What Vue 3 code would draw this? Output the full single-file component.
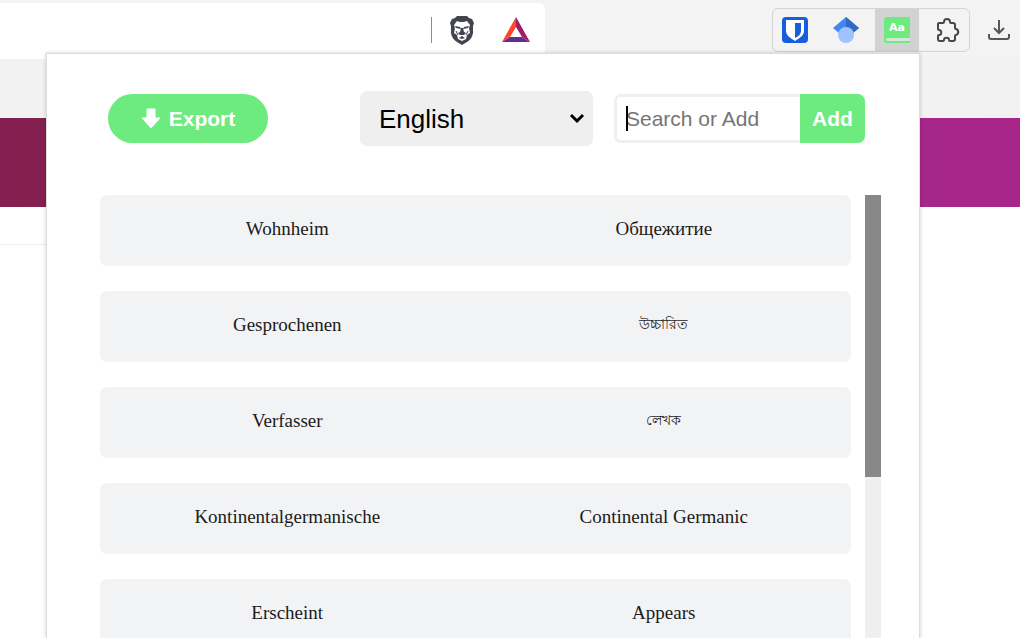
<template>
  <div class="browser">
    <header class="toolbar">
      <div class="address-bar">
        <span class="divider"></span>
        <button class="icon-btn" aria-label="Shields">
          <svg width="26" height="30" viewBox="0 0 26 30">
            <path
              d="M8 1h10l2 2 3 1 2 4-1 3v7c-1 5-3 7-6 9l-5 3-5-3c-3-2-5-4-6-9v-7L1 8l2-4 3-1z"
              fill="#42444f"
            />
            <path
              d="M8 6l3 1h4l3-1 3 4-1 3 1 5-3 2-1 4-4 2-4-2-1-4-3-2 1-5-1-3z"
              fill="#fff"
            />
            <path
              d="M6 11l5 1 1 2-5-1zM20 11l-5 1-1 2 5-1zM12 13h2l1 4 2 1-2 2h-4l-2-2 2-1zM10 23l3-2 3 2-3 1z"
              fill="#42444f"
            />
            <path d="M7 16l2 4M19 16l-2 4" fill="none" stroke="#42444f" />
          </svg>
        </button>
        <button class="icon-btn" aria-label="Rewards">
          <svg width="30" height="28" viewBox="0 0 30 28">
            <path d="M15 1L1 26l8-5 6-10z" fill="#ff4724" />
            <path d="M15 1l14 25-8-5-6-10z" fill="#9e1f63" />
            <path d="M1 26h28l-8-5H9z" fill="#662d91" />
          </svg>
        </button>
      </div>

      <div class="extensions">
        <button class="icon-btn ext" aria-label="Bitwarden">
          <svg width="26" height="26" viewBox="0 0 26 26">
            <rect width="26" height="26" rx="4" fill="#175ddc" />
            <path d="M4 3h18v11c0 4-4 7-9 10-5-3-9-6-9-10z" fill="#fff" />
            <path d="M13 6h6v8c0 3-2 5-6 7z" fill="#175ddc" />
          </svg>
        </button>
        <button class="icon-btn ext" aria-label="Google Scholar">
          <svg width="26" height="26" viewBox="0 0 26 26">
            <path d="M13 0L0 11l6 5h14l6-5z" fill="#4285f4" />
            <path d="M13 0l13 11-6 5-7-5z" fill="#356ac3" />
            <circle cx="13" cy="18" r="8" fill="#a0c3ff" />
            <path d="M6 15a8 8 0 0 1 14 0 8 8 0 0 0-14 0z" fill="#76a7fa" />
          </svg>
        </button>
        <button class="icon-btn ext active" aria-label="Dictionary">
          <svg width="26" height="26" viewBox="0 0 26 26">
            <path d="M3 0h23v26H3a3 3 0 0 1-3-3V3a3 3 0 0 1 3-3z" fill="#6eeb7f" />
            <path d="M3 21h23v3H3q-2-1.500 0-3z" fill="#d8e6d9" />
            <text x="13" y="14" text-anchor="middle" class="book-text">Aa</text>
          </svg>
        </button>
        <button class="icon-btn ext" aria-label="Extensions">
          <svg width="26" height="26" viewBox="0 0 26 26">
            <path
              d="M5 6h4q1 0 1-1c0-4 6-4 6 0q0 1 1 1h2q2 0 2 2v3q0 1 1 1c3 1 3 5 0 6q-1 0-1 1v3q0 2-2 2h-3q-1 0-1-1c0-3-5-3-5 0q0 1-1 1H6q-2 0-2-2v-3q0-1 1-1c3 0 3-5 0-5q-1 0-1-1V7q0-1 1-1z"
              fill="none"
              stroke="#45474b"
              stroke-width="2"
              stroke-linejoin="round"
            />
          </svg>
        </button>
      </div>

      <button class="icon-btn download" aria-label="Downloads">
        <svg width="22" height="22" viewBox="0 0 22 22" fill="none" stroke="#55575b" stroke-width="2">
          <path d="M11 1v13M6 9l5 5 5-5M1 15v3q0 2 2 2h16q2 0 2-2v-3" />
        </svg>
      </button>
    </header>

    <div class="page-top"></div>
    <div class="banner"></div>
    <div class="page-line"></div>

    <main class="popup">
      <div class="controls">
        <button class="export-btn">
          <svg width="20" height="22" viewBox="0 0 20 22">
            <path
              d="M6 1h8v9h5L10 20 1 10h5z"
              fill="#fff"
              stroke="#fff"
              stroke-linejoin="round"
            />
          </svg>
          Export
        </button>

        <div class="language">
          <select v-model="language" aria-label="Language">
            <option v-for="lang in languages" :key="lang">{{ lang }}</option>
          </select>
          <svg class="chevron" width="16" height="12" viewBox="0 0 16 12">
            <path d="M2 2l6 6 6-6" fill="none" stroke="#000" stroke-width="3" />
          </svg>
        </div>

        <form class="search" @submit.prevent="addWord">
          <div class="field">
            <input v-model="query" type="text" placeholder="Search or Add" aria-label="Search or Add" />
            <span class="caret"></span>
          </div>
          <button class="add-btn">Add</button>
        </form>
      </div>

      <div class="word-area">
        <ul class="words">
          <li v-for="word in words" :key="word.source" class="word">
            <span>{{ word.source }}</span>
            <span :lang="word.lang">{{ word.target }}</span>
          </li>
        </ul>
        <div class="track">
          <div class="thumb"></div>
        </div>
      </div>
    </main>
  </div>
</template>

<script setup>
import { ref } from 'vue';

const languages = ['English', 'German', 'Russian', 'Bengali'];
const language = ref('English');
const query = ref('');

const words = ref([
  { source: 'Wohnheim', target: 'Общежитие', lang: 'ru' },
  { source: 'Gesprochenen', target: 'উচ্চারিত', lang: 'bn' },
  { source: 'Verfasser', target: 'লেখক', lang: 'bn' },
  { source: 'Kontinentalgermanische', target: 'Continental Germanic', lang: 'en' },
  { source: 'Erscheint', target: 'Appears', lang: 'en' }
]);

const addWord = () => {
  const source = query.value.trim();
  if (!source) return;
  words.value.unshift({ source, target: '', lang: 'en' });
  query.value = '';
};
</script>

<style>
body {
  margin: 0;
  background: #fff;
}
</style>

<style scoped>
.browser {
  position: relative;
  height: 100vh;
  overflow: hidden;
  font-family: "Liberation Sans", Arial, sans-serif;
}

button,
input,
select {
  font-family: inherit;
  border: none;
  margin: 0;
  padding: 0;
}

svg {
  display: block;
}

.toolbar {
  display: flex;
  align-items: flex-start;
  height: 59px;
  background: #f3f3f3;
}

.address-bar {
  display: flex;
  align-items: center;
  justify-content: flex-end;
  box-sizing: border-box;
  flex: 0 1 545px;
  height: 56px;
  margin-top: 3px;
  padding: 0 14px 2px 0;
  border-top-right-radius: 6px;
  background: #fff;
}

.divider {
  width: 1px;
  height: 26px;
  margin-right: 17px;
  background: #8d8d8d;
}

.icon-btn {
  display: flex;
  align-items: center;
  justify-content: center;
  background: none;
}

.address-bar .icon-btn + .icon-btn {
  margin-left: 26px;
}

.extensions {
  display: flex;
  margin: 8px 0 0 auto;
  border: 1px solid #d3d3d3;
  border-radius: 6px;
}

.ext {
  width: 44px;
  height: 42px;
}

.ext:first-child {
  margin-right: 7px;
}

.ext:last-child {
  margin-left: 6px;
}

.ext.active {
  margin-left: 7px;
  background: #d2d2d2;
}

.book-text {
  fill: #fff;
  font-family: "DejaVu Sans", sans-serif;
  font-size: 11px;
  font-weight: 700;
}

.download {
  height: 44px;
  margin: 8px 10px 0 18px;
}

.page-top {
  height: 59px;
  background: #f2f2f2;
}

.banner {
  height: 89px;
  background: linear-gradient(90deg, #831e50, #84204f 5%, #a62689 90%, #a92589);
}

.page-line {
  width: 47px;
  height: 37px;
  border-bottom: 1px solid #ececec;
}

.popup {
  position: absolute;
  top: 53px;
  right: 100px;
  bottom: 0;
  left: 46px;
  display: flex;
  flex-direction: column;
  border: 1px solid #dcdddd;
  border-bottom: none;
  background: #fff;
  box-shadow: 0 0 4px rgba(0, 0, 0, 0.2);
}

.controls {
  display: flex;
  align-items: center;
  gap: 21px;
  padding: 37px 54px 49px 61px;
}

.export-btn {
  display: flex;
  align-items: center;
  justify-content: center;
  gap: 8px;
  width: 160px;
  height: 49px;
  margin-right: auto;
  border-radius: 25px;
  background: #6eeb7f;
  color: #fff;
  font-size: 21px;
  font-weight: 700;
}

.language {
  position: relative;
}

.language select {
  appearance: none;
  display: block;
  width: 233px;
  height: 55px;
  padding: 0 40px 0 19px;
  border-radius: 7px;
  background: #efefef;
  color: #000;
  font-size: 26px;
}

.chevron {
  position: absolute;
  top: 22px;
  right: 8px;
  pointer-events: none;
}

.search {
  display: flex;
}

.field {
  position: relative;
}

.field input {
  box-sizing: border-box;
  width: 186px;
  height: 49px;
  padding-left: 9px;
  border: 3px solid #efefef;
  border-right: none;
  border-radius: 7px 0 0 7px;
  outline: none;
  font-size: 21px;
}

.field input::placeholder {
  color: #757575;
}

.caret {
  position: absolute;
  top: 12px;
  left: 12px;
  width: 2px;
  height: 25px;
  background: #000;
}

.add-btn {
  width: 65px;
  height: 49px;
  border-radius: 0 7px 7px 0;
  background: #6eeb7f;
  color: #fff;
  font-size: 21px;
  font-weight: 700;
}

.word-area {
  display: flex;
  flex: 1;
  gap: 14px;
  min-height: 0;
  padding: 0 38px 0 53px;
}

.words {
  display: flex;
  flex: 1;
  flex-direction: column;
  gap: 25px;
  margin: 0;
  padding: 0;
  overflow: hidden;
  list-style: none;
}

.word {
  display: grid;
  flex: none;
  grid-template-columns: 1fr 1fr;
  column-gap: 2px;
  align-items: center;
  box-sizing: border-box;
  height: 71px;
  padding-bottom: 3px;
  border-radius: 7px;
  background: #f2f3f5;
  color: #1b1b1b;
  font-family: "Liberation Serif", "Times New Roman", serif;
  font-size: 19px;
  line-height: 24px;
  text-align: center;
}

.word :lang(bn) {
  font-size: 14px;
}

.track {
  width: 16px;
  background: #efefef;
}

.thumb {
  height: 282px;
  background: #888;
}
</style>
